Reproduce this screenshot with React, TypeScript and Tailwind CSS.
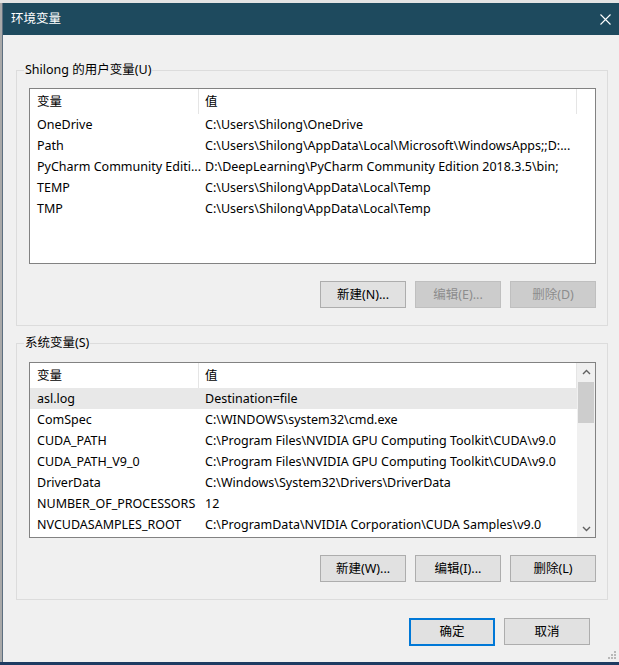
import React from "react";

const userVars: [string, string][] = [
  ["OneDrive", "C:\\Users\\Shilong\\OneDrive"],
  ["Path", "C:\\Users\\Shilong\\AppData\\Local\\Microsoft\\WindowsApps;;D:..."],
  ["PyCharm Community Editi...", "D:\\DeepLearning\\PyCharm Community Edition 2018.3.5\\bin;"],
  ["TEMP", "C:\\Users\\Shilong\\AppData\\Local\\Temp"],
  ["TMP", "C:\\Users\\Shilong\\AppData\\Local\\Temp"],
];

const sysVars: [string, string][] = [
  ["asl.log", "Destination=file"],
  ["ComSpec", "C:\\WINDOWS\\system32\\cmd.exe"],
  ["CUDA_PATH", "C:\\Program Files\\NVIDIA GPU Computing Toolkit\\CUDA\\v9.0"],
  ["CUDA_PATH_V9_0", "C:\\Program Files\\NVIDIA GPU Computing Toolkit\\CUDA\\v9.0"],
  ["DriverData", "C:\\Windows\\System32\\Drivers\\DriverData"],
  ["NUMBER_OF_PROCESSORS", "12"],
  ["NVCUDASAMPLES_ROOT", "C:\\ProgramData\\NVIDIA Corporation\\CUDA Samples\\v9.0"],
];

function Header() {
  return (
    <div className="flex h-[25px] shrink-0 leading-[25px]">
      <div className="w-[169px] h-full pl-[7px] border-r border-[#e5e5e5]">变量</div>
      <div className="w-[378px] h-full pl-[6px] border-r border-[#e5e5e5]">值</div>
    </div>
  );
}

function Row({ name, value, selected }: { name: string; value: string; selected?: boolean }) {
  return (
    <div className={`flex h-[21px] leading-[21px] w-[547px] shrink-0 ${selected ? "bg-[#e8e8e8]" : ""}`}>
      <div className="w-[169px] pl-[7px] whitespace-nowrap">{name}</div>
      <div className="flex-1 pl-[6px] whitespace-nowrap">{value}</div>
    </div>
  );
}

function Btn({ children, disabled, primary }: { children: React.ReactNode; disabled?: boolean; primary?: boolean }) {
  const cls = disabled
    ? "bg-[#cccccc] border border-[#bfbfbf] text-[#8d8d8d]"
    : primary
    ? "bg-[#e1e1e1] border-2 border-[#0078d7] text-black"
    : "bg-[#e1e1e1] border border-[#adadad] text-black";
  return (
    <div className={`w-[86px] flex items-center justify-center leading-[16px] ${cls} ${primary ? "h-[28px]" : "h-[27px]"}`}>
      {children}
    </div>
  );
}

function Chevron({ up }: { up?: boolean }) {
  return (
    <svg width="9" height="6" viewBox="0 0 9 6" className="shrink-0">
      <path
        d={up ? "M1 5 L4.5 1.5 L8 5" : "M1 1 L4.5 4.5 L8 1"}
        fill="none"
        stroke="#606060"
        strokeWidth="1.4"
      />
    </svg>
  );
}

export default function App() {
  return (
    <div className="w-[619px] h-[665px] flex flex-col bg-[#1d3b62] overflow-hidden font-['Noto_Sans','Noto_Sans_CJK_SC',sans-serif] text-[12.5px] text-black leading-[16px]">
      <div className="h-[3px] bg-[#e4e4e4] shrink-0" />
      <div className="flex h-[659px] shrink-0">
        <div className="w-[2px] bg-[#a9a9a9] shrink-0" />
        <div className="relative flex-1 flex flex-col bg-[#f0f0f0] border-l border-[#5d6f80]">
          {/* title bar */}
          <div className="h-[32px] bg-[#1e4a5e] flex items-center justify-between pl-[8px] pr-[8px] shrink-0">
            <span className="text-white text-[12.5px] leading-[16px]">环境变量</span>
            <svg width="11" height="11" viewBox="0 0 11 11">
              <path d="M0.5 0.5 L10.5 10.5 M10.5 0.5 L0.5 10.5" stroke="#ffffff" strokeWidth="1.1" />
            </svg>
          </div>

          {/* user vars group */}
          <div className="mt-[35px] ml-[13px] mr-[11px] border border-[#dcdcdc] pl-[12px] pr-[11px] pb-[17px] flex flex-col">
            <div className="-mt-[9px] ml-[-5px] px-[1px] h-[16px] leading-[16px] bg-[#f0f0f0] self-start whitespace-nowrap">
              Shilong 的用户变量(U)
            </div>
            <div className="mt-[10px] h-[176px] border border-[#828282] bg-white flex flex-col overflow-hidden">
              <Header />
              {userVars.map(([n, v]) => (
                <Row key={n} name={n} value={v} />
              ))}
            </div>
            <div className="mt-[17px] flex justify-end gap-[9px]">
              <Btn>新建(N)...</Btn>
              <Btn disabled>编辑(E)...</Btn>
              <Btn disabled>删除(D)</Btn>
            </div>
          </div>

          {/* system vars group */}
          <div className="mt-[17px] ml-[13px] mr-[11px] border border-[#dcdcdc] pl-[12px] pr-[11px] pb-[17px] flex flex-col">
            <div className="-mt-[9px] ml-[-5px] px-[1px] h-[16px] leading-[16px] bg-[#f0f0f0] self-start whitespace-nowrap">
              系统变量(S)
            </div>
            <div className="mt-[11px] h-[176px] border border-[#828282] bg-white flex overflow-hidden">
              <div className="flex flex-col w-[547px]">
                <Header />
                {sysVars.map(([n, v], i) => (
                  <Row key={n} name={n} value={v} selected={i === 0} />
                ))}
              </div>
              <div className="w-[18px] bg-[#f0f0f0] flex flex-col items-center">
                <div className="h-[17px] flex items-center justify-center">
                  <Chevron up />
                </div>
                <div className="mt-[2px] w-[16px] h-[41px] bg-[#cdcdcd]" />
                <div className="flex-1" />
                <div className="h-[17px] flex items-center justify-center">
                  <Chevron />
                </div>
              </div>
            </div>
            <div className="mt-[17px] flex justify-end gap-[9px]">
              <Btn>新建(W)...</Btn>
              <Btn>编辑(I)...</Btn>
              <Btn>删除(L)</Btn>
            </div>
          </div>

          {/* dialog buttons */}
          <div className="mt-[18px] flex justify-end gap-[9px] pr-[29px]">
            <Btn primary>确定</Btn>
            <Btn>取消</Btn>
          </div>

          {/* size grip */}
          <svg className="absolute right-[2px] bottom-[2px]" width="10" height="10" viewBox="0 0 10 10">
            <rect x="7" y="1" width="2" height="2" fill="#b8b8b8" />
            <rect x="4" y="4" width="2" height="2" fill="#b8b8b8" />
            <rect x="7" y="4" width="2" height="2" fill="#b8b8b8" />
            <rect x="1" y="7" width="2" height="2" fill="#b8b8b8" />
            <rect x="4" y="7" width="2" height="2" fill="#b8b8b8" />
            <rect x="7" y="7" width="2" height="2" fill="#b8b8b8" />
          </svg>
        </div>
      </div>
      <div className="flex-1" />
    </div>
  );
}
